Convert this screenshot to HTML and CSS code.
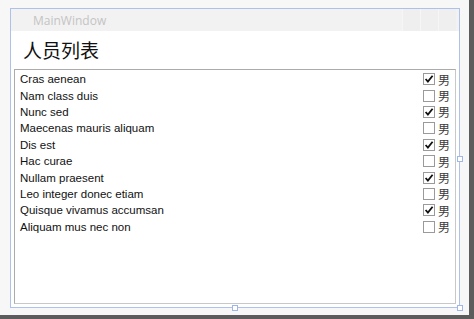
FILE: index.html
```html
<!DOCTYPE html>
<html lang="zh-CN">
<head>
    <meta charset="UTF-8">
    <title>MainWindow</title>
    <link rel="stylesheet" href="styles.css">
</head>
<body>
    <div class="screen">
        <div class="window">
            <div class="title-bar">
                <span class="title-text">MainWindow</span>
                <div class="title-buttons">
                    <span class="tb"></span><span class="tb"></span><span class="tb"></span>
                </div>
            </div>
            <div class="content">
                <div class="heading">人员列表</div>
                <div class="list-box" id="list"></div>
            </div>
            <span class="handle handle-right"></span>
            <span class="handle handle-bottom"></span>
            <span class="handle handle-corner"></span>
        </div>
    </div>

    <script>
        const people = [
            ['Cras aenean', true],
            ['Nam class duis', false],
            ['Nunc sed', true],
            ['Maecenas mauris aliquam', false],
            ['Dis est', true],
            ['Hac curae', false],
            ['Nullam praesent', true],
            ['Leo integer donec etiam', false],
            ['Quisque vivamus accumsan', true],
            ['Aliquam mus nec non', false]
        ];

        const tick = '<svg viewBox="0 0 12 12" width="12" height="12"><path d="M2.6 6 L4.9 8.6 L9.6 2.8" fill="none" stroke="#111" stroke-width="1.8"/></svg>';

        const list = document.getElementById('list');
        people.forEach(([name, male]) => {
            const row = document.createElement('div');
            row.className = 'row';
            row.innerHTML = `<span class="name">${name}</span>
                <span class="sex"><span class="check">${male ? tick : ''}</span><span class="sex-label">男</span></span>`;
            list.appendChild(row);
        });
    </script>
</body>
</html>
```

FILE: styles.css
```css
body {
    margin: 0;
    background: #f6f6f6;
    font-family: "Liberation Sans", "Noto Sans CJK SC", sans-serif;
}
.screen {
    width: 459px;
    height: 307px;
    padding: 8px 0 0 10px;
    border-right: 5px solid #5c5c5c;
    border-bottom: 4px solid #5c5c5c;
    background: #f7f7f7;
}
.window {
    position: relative;
    width: 448px;
    height: 298px;
    border: 1px solid #aec1ea;
    background: #fff;
    display: flex;
    flex-direction: column;
}
.title-bar {
    height: 22px;
    background: #f2f2f2;
    display: flex;
    align-items: center;
    justify-content: space-between;
}
.title-text {
    margin-left: 22px;
    font-family: "Open Sans", "Noto Sans", sans-serif;
    font-size: 12px;
    color: #c4c4c4;
}
.title-buttons {
    display: flex;
    align-self: stretch;
    margin-right: 3px;
}
.tb {
    width: 17px;
    background: #efefef;
    border-left: 1px solid #f6f6f6;
}
.content {
    flex: 1;
    display: flex;
    flex-direction: column;
    padding: 0 3px 3px 3px;
}
.heading {
    height: 38px;
    padding-left: 9px;
    font-family: "Noto Sans CJK SC", sans-serif;
    font-size: 19px;
    line-height: 37px;
    color: #111;
}
.list-box {
    flex: 1;
    border: 1px solid #ababab;
    border-right-color: #c8c8c8;
    border-bottom-color: #c8c8c8;
    padding-top: 1px;
}
.row {
    height: 16.4px;
    display: flex;
    align-items: center;
    justify-content: space-between;
    padding: 0 5px 0 5px;
    font-size: 11.5px;
    color: #111;
}
.sex {
    display: flex;
    align-items: center;
    gap: 3px;
}
.check {
    width: 12px;
    height: 12px;
    box-sizing: border-box;
    border: 1px solid #9a9a9a;
    background: #fff;
    display: flex;
}
.check svg {
    margin: -1px;
}
.sex-label {
    font-family: "Noto Sans CJK SC", sans-serif;
    font-size: 12px;
    color: #3a3a3a;
}
.handle {
    position: absolute;
    width: 4px;
    height: 4px;
    border: 1px solid #9fb6e6;
    background: #fff;
}
.handle-right {
    right: -4px;
    top: 147px;
}
.handle-bottom {
    left: 221px;
    bottom: -4px;
}
.handle-corner {
    right: -4px;
    bottom: -4px;
}
```
